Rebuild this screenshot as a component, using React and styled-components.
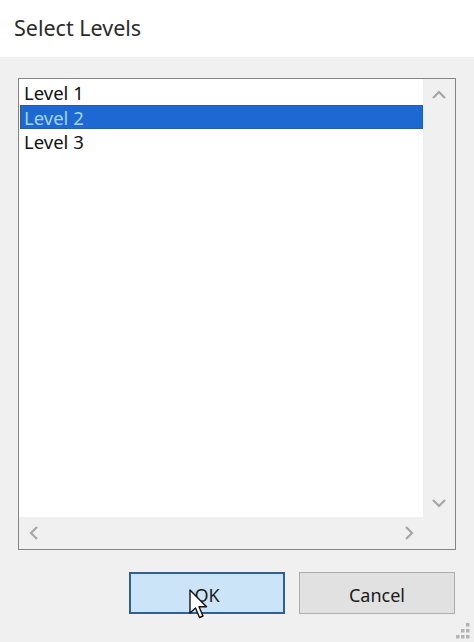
import React, { useState } from 'react';
import styled, { createGlobalStyle } from 'styled-components';

const GlobalStyle = createGlobalStyle`
  html, body {
    margin: 0;
    padding: 0;
    background: #f0f0f0;
  }
  body {
    font-family: 'Noto Sans', 'Open Sans', 'Liberation Sans', sans-serif;
  }
`;

const Window = styled.div`
  position: relative;
  width: 474px;
  height: 642px;
  background: #f0f0f0;
  overflow: hidden;
`;

const Header = styled.div`
  height: 57px;
  background: #ffffff;
  box-sizing: border-box;
  padding: 14px 0 0 14px;
`;

const Title = styled.h1`
  margin: 0;
  font-size: 21.5px;
  font-weight: 400;
  color: #2b2b2b;
  line-height: 28px;
`;

const Body = styled.div`
  padding: 21px 18px 0 18px;
`;

const ListBox = styled.div`
  display: grid;
  grid-template-columns: 1fr 32px;
  grid-template-rows: 1fr 32px;
  width: 438px;
  height: 472px;
  box-sizing: border-box;
  border: 1px solid #858585;
  background: #f0f0f0;
`;

const Items = styled.ul`
  list-style: none;
  margin: 0;
  padding: 1px 0 0 1px;
  background: #ffffff;
`;

const Item = styled.li`
  height: 24.5px;
  line-height: 25px;
  padding-left: 4px;
  font-size: 18.5px;
  color: ${p => (p.selected ? '#a6d6fb' : '#111111')};
  background: ${p => (p.selected ? '#1d68d3' : 'transparent')};
  box-shadow: ${p => (p.selected ? 'inset 0 0 0 1px #2a5aa0' : 'none')};
  white-space: nowrap;
`;

const VScroll = styled.div`
  display: flex;
  flex-direction: column;
  justify-content: space-between;
  align-items: center;
  padding: 10px 0 8px;
  background: #f0f0f0;
`;

const HScroll = styled.div`
  grid-column: 1 / 3;
  display: flex;
  justify-content: space-between;
  align-items: center;
  padding: 0 40px 0 9px;
  background: #f0f0f0;
`;

const Footer = styled.div`
  display: flex;
  justify-content: flex-end;
  gap: 14px;
  padding: 22px 19px 0 0;
`;

const Button = styled.button`
  position: relative;
  width: 156px;
  height: 42px;
  box-sizing: border-box;
  font-family: inherit;
  font-size: 18px;
  color: #1a1a1a;
  background: ${p => (p.primary ? '#cce4f7' : '#e1e1e1')};
  border: 1px solid ${p => (p.primary ? '#2f5f93' : '#adadad')};
  border-width: ${p => (p.primary ? '2px' : '1px')};
  padding: 3px 0 0;
  cursor: default;
`;

const Pointer = styled.svg`
  position: absolute;
  left: 58px;
  top: 15px;
  pointer-events: none;
`;

const Grip = styled.svg`
  position: absolute;
  right: 3px;
  bottom: 2px;
`;

const Chevron = ({ dir }) => {
  const paths = {
    up: 'M2 9 L8 3 L14 9',
    down: 'M2 3 L8 9 L14 3',
    left: 'M9 2 L3 8 L9 14',
    right: 'M3 2 L9 8 L3 14',
  };
  const vertical = dir === 'up' || dir === 'down';
  return (
    <svg width={vertical ? 16 : 12} height={vertical ? 12 : 16} viewBox={vertical ? '0 0 16 12' : '0 0 12 16'}>
      <path d={paths[dir]} fill="none" stroke="#a6a6a6" strokeWidth="2.2" />
    </svg>
  );
};

const levels = ['Level 1', 'Level 2', 'Level 3'];

export default function App() {
  const [selected, setSelected] = useState(1);

  return (
    <Window>
      <GlobalStyle />
      <Header>
        <Title>Select Levels</Title>
      </Header>
      <Body>
        <ListBox>
          <Items>
            {levels.map((name, i) => (
              <Item key={name} selected={i === selected} onClick={() => setSelected(i)}>
                {name}
              </Item>
            ))}
          </Items>
          <VScroll>
            <Chevron dir="up" />
            <Chevron dir="down" />
          </VScroll>
          <HScroll>
            <Chevron dir="left" />
            <Chevron dir="right" />
          </HScroll>
        </ListBox>
      </Body>
      <Footer>
        <Button primary>
          OK
          <Pointer width="22" height="32" viewBox="0 0 22 32">
            <path
              d="M1 1 L1 24 L6.5 19 L10.5 28.5 L14 27 L10 17.8 L17.5 17.8 Z"
              fill="#ffffff"
              stroke="#111111"
              strokeWidth="1.4"
              strokeLinejoin="round"
            />
          </Pointer>
        </Button>
        <Button>Cancel</Button>
      </Footer>
      <Grip width="16" height="18" viewBox="0 0 16 18">
        <rect x="11" y="1" width="3.5" height="3.5" fill="#b4b4b4" />
        <rect x="6" y="7" width="3.5" height="3.5" fill="#b4b4b4" />
        <rect x="11" y="7" width="3.5" height="3.5" fill="#b4b4b4" />
        <rect x="1" y="13" width="3.5" height="3.5" fill="#b4b4b4" />
        <rect x="6" y="13" width="3.5" height="3.5" fill="#b4b4b4" />
        <rect x="11" y="13" width="3.5" height="3.5" fill="#b4b4b4" />
      </Grip>
    </Window>
  );
}
